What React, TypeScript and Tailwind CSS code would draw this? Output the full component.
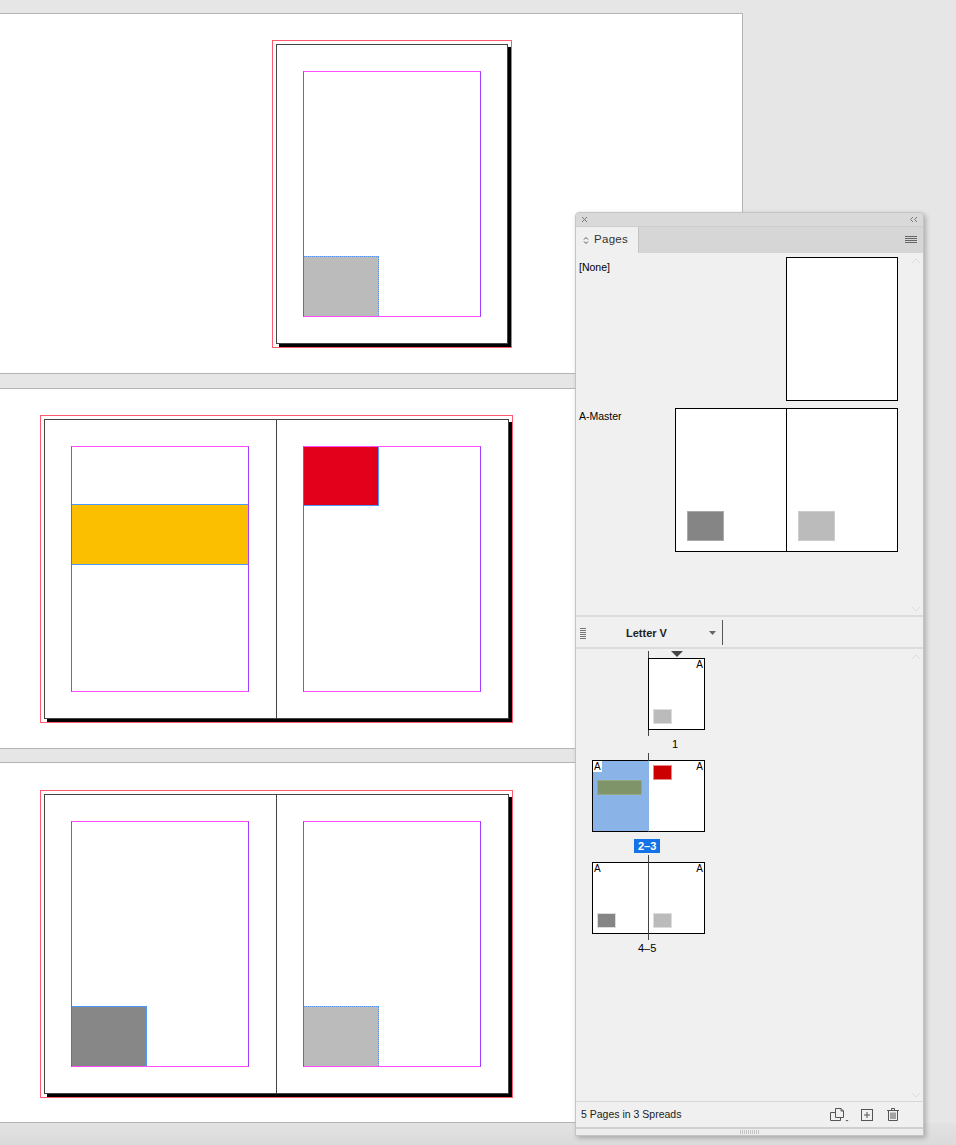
import React from "react";

const ui = { fontFamily: '"Liberation Sans", Arial, sans-serif' };

function Margin({ children }: { children?: React.ReactNode }) {
  return (
    <div className="flex h-[246px] w-[178px] flex-col border-x border-y border-x-[#a23cff] border-y-[#ff4dff]">
      {children}
    </div>
  );
}

function SinglePage() {
  return (
    <div className="h-[308px] w-[240px] border border-[#ff5a6e] p-[3px]">
      <div className="h-[300px] w-[232px] border border-[#444] bg-white pl-[26px] pt-[26px] shadow-[3px_3px_0_0_#000]">
        <Margin>
          <div className="flex-1" />
          <div className="h-[60px] w-[75px] border-r border-t border-dotted border-[#4d8fff] bg-[#bbbbbb]" />
        </Margin>
      </div>
    </div>
  );
}

function Spread({ left, right }: { left: React.ReactNode; right: React.ReactNode }) {
  return (
    <div className="h-[308px] w-[473px] border border-[#ff5a6e] p-[3px]">
      <div className="flex h-[300px] w-[465px] border border-[#444] bg-white shadow-[3px_3px_0_0_#000]">
        <div className="h-full w-[232px] border-r border-[#444] pl-[26px] pt-[26px]">
          <Margin>{left}</Margin>
        </div>
        <div className="h-full flex-1 pl-[26px] pt-[26px]">
          <Margin>{right}</Margin>
        </div>
      </div>
    </div>
  );
}

function Chevron({ up }: { up?: boolean }) {
  return (
    <svg width="10" height="6" viewBox="0 0 10 6" className="text-[#dcdcdc]">
      <path d={up ? "M1 5 L5 1 L9 5" : "M1 1 L5 5 L9 1"} fill="none" stroke="currentColor" strokeWidth="1" />
    </svg>
  );
}

function Thumb({ children, className = "" }: { children?: React.ReactNode; className?: string }) {
  return <div className={"relative h-[72px] w-[57px] bg-white " + className}>{children}</div>;
}

function A({ bg }: { bg?: boolean }) {
  return (
    <span
      className={"absolute top-0 px-[1px] text-[10px] leading-[11px] text-black " + (bg ? "left-0 bg-white" : "right-0")}
      style={ui}
    >
      A
    </span>
  );
}

function Sq({ color, className = "" }: { color: string; className?: string }) {
  return <div className={"absolute h-[15px] w-[19px] border border-[#dddddd] " + color + " " + className} />;
}

export default function App() {
  return (
    <div className="relative h-[1145px] w-[956px] overflow-hidden bg-[#e6e6e6]" style={ui}>
      {/* document canvas */}
      <div className="flex flex-col pt-[13px]">
        <div className="h-[361px] w-[743px] border-y border-r border-[#b4b4b4] bg-white pl-[272px] pt-[26px]">
          <SinglePage />
        </div>
        <div className="mt-[14px] h-[361px] w-[743px] border-y border-r border-[#b4b4b4] bg-white pl-[40px] pt-[26px]">
          <Spread
            left={
              <>
                <div className="h-[57px]" />
                <div className="h-[61px] w-full border-y border-[#4d9aff] bg-[#fbbf00]" />
              </>
            }
            right={<div className="h-[59px] w-[75px] border-b border-r border-[#4d9aff] bg-[#e2001a]" />}
          />
        </div>
        <div className="mt-[13px] h-[361px] w-[743px] border-y border-r border-[#b4b4b4] bg-white pl-[40px] pt-[27px]">
          <Spread
            left={
              <>
                <div className="flex-1" />
                <div className="h-[60px] w-[75px] border-r border-t border-[#4d9aff] bg-[#878787]" />
              </>
            }
            right={
              <>
                <div className="flex-1" />
                <div className="h-[60px] w-[75px] border-r border-t border-dotted border-[#4d8fff] bg-[#bbbbbb]" />
              </>
            }
          />
        </div>
        <div className="h-[30px] bg-gradient-to-b from-[#e2e2e2] to-[#d8d8d8]" />
      </div>

      {/* Pages panel */}
      <div className="absolute left-[575px] top-[212px] flex h-[924px] w-[349px] flex-col overflow-hidden rounded-t-[4px] border border-[#c4c4c4] bg-[#f0f0f0] shadow-[2px_2px_5px_rgba(0,0,0,0.25)]">
        <div className="flex h-[13px] items-center justify-between bg-[#d9d9d9] px-[5px]">
          <svg width="7" height="7" viewBox="0 0 7 7">
            <path d="M1 1 L6 6 M6 1 L1 6" stroke="#7a7a7a" strokeWidth="1" />
          </svg>
          <svg width="9" height="7" viewBox="0 0 9 7">
            <path d="M4 1 L1.5 3.5 L4 6 M8 1 L5.5 3.5 L8 6" fill="none" stroke="#7a7a7a" strokeWidth="1" />
          </svg>
        </div>
        <div className="flex h-[27px] items-stretch border-t border-[#cdcdcd] bg-[#d6d6d6]">
          <div className="flex w-[63px] items-center gap-[5px] border-r border-[#c2c2c2] bg-[#f0f0f0] pl-[7px]">
            <svg width="6" height="9" viewBox="0 0 6 9">
              <path d="M1 3.5 L3 1.5 L5 3.5 M1 5.5 L3 7.5 L5 5.5" fill="none" stroke="#555" strokeWidth="1" />
            </svg>
            <span className="text-[11.5px] tracking-[0.3px] text-[#333]">Pages</span>
          </div>
          <div className="flex-1" />
          <div className="flex items-center pr-[6px]">
            <svg width="12" height="8" viewBox="0 0 12 8">
              <path d="M0 0.5 H12 M0 2.5 H12 M0 4.5 H12 M0 6.5 H12" stroke="#666" strokeWidth="1" />
            </svg>
          </div>
        </div>

        {/* masters */}
        <div className="flex h-[362px]">
          <div className="flex flex-1 flex-col gap-[7px] pt-[4px]">
            <div className="flex justify-between pl-[3px]">
              <span className="mt-[3px] text-[10.5px] text-black">[None]</span>
              <div className="h-[144px] w-[112px] border border-black bg-white" />
            </div>
            <div className="flex justify-between pl-[3px]">
              <span className="mt-[1px] text-[10.5px] text-black">A-Master</span>
              <div className="flex h-[144px] w-[223px] border border-black bg-white">
                <div className="flex h-full w-[111px] flex-col justify-end border-r border-black pb-[10px] pl-[11px]">
                  <div className="h-[30px] w-[37px] border border-[#aaa] bg-[#858585]" />
                </div>
                <div className="flex h-full flex-1 flex-col justify-end pb-[10px] pl-[11px]">
                  <div className="h-[30px] w-[37px] border border-[#ccc] bg-[#bbbbbb]" />
                </div>
              </div>
            </div>
          </div>
          <div className="flex w-[25px] flex-col items-center justify-between pb-[3px] pl-[11px] pt-[5px]">
            <Chevron up />
            <Chevron />
          </div>
        </div>

        {/* toolbar */}
        <div className="flex h-[34px] items-center border-y-2 border-[#dcdcdc]">
          <svg width="6" height="11" viewBox="0 0 6 11" className="ml-[4px] mt-[2px]">
            <path d="M0 0.5 H6 M0 2.5 H6 M0 4.5 H6 M0 6.5 H6 M0 8.5 H6 M0 10.5 H6" stroke="#555" strokeWidth="0.8" />
          </svg>
          <span className="ml-[40px] mt-[2px] text-[11px] font-bold text-[#222]">Letter V</span>
          <svg width="7" height="4" viewBox="0 0 7 4" className="ml-[42px] mt-[1px]">
            <path d="M0 0 H7 L3.5 4 Z" fill="#666" />
          </svg>
          <div className="ml-[6px] mt-[1px] h-[25px] w-px bg-[#555]" />
        </div>

        {/* pages */}
        <div className="flex flex-1">
          <div className="flex flex-1 flex-col gap-[2px] pl-[16px] pt-[2px]">
            {/* page 1 */}
            <div className="relative flex w-[113px] flex-col pt-[7px]">
              <div className="absolute left-[56px] top-0 h-[85px] w-px bg-[#444]" />
              <svg width="12" height="6" viewBox="0 0 12 6" className="absolute left-[79px] top-0">
                <path d="M0 0 H12 L6 6 Z" fill="#444" />
              </svg>
              <Thumb className="ml-[56px] border border-black">
                <A />
                <Sq color="bg-[#bbbbbb]" className="bottom-[5px] left-[4px]" />
              </Thumb>
              <div className="mt-[7px] flex h-[14px] items-center pl-[80px] text-[11px] text-black">1</div>
            </div>
            {/* spread 2-3 */}
            <div className="relative flex w-[113px] flex-col pt-[7px]">
              <div className="absolute left-[56px] top-0 h-[79px] w-px bg-[#444]" />
              <div className="flex h-[72px] w-[113px] border border-black">
                <div className="relative h-full w-[56px] bg-[#8ab4e8]">
                  <A bg />
                  <div className="absolute left-[4px] top-[19px] h-[15px] w-[45px] border border-[#95a884] bg-[#7f9468]" />
                </div>
                <div className="relative h-full flex-1 bg-white">
                  <A />
                  <Sq color="bg-[#cc0000]" className="left-[4px] top-[4px] border-[#e48a8a]" />
                </div>
              </div>
              <div className="mt-[7px] flex h-[14px] items-center pl-[42px]">
                <span className="bg-[#1473e6] px-[4px] text-[11px] font-bold leading-[14px] text-white">2–3</span>
              </div>
            </div>
            {/* spread 4-5 */}
            <div className="relative flex w-[113px] flex-col pt-[7px]">
              <div className="absolute left-[56px] top-0 h-[85px] w-px bg-[#444]" />
              <div className="flex h-[72px] w-[113px] border border-black bg-white">
                <div className="relative h-full w-[56px]">
                  <A bg />
                  <Sq color="bg-[#858585]" className="bottom-[5px] left-[4px]" />
                </div>
                <div className="relative h-full flex-1">
                  <A />
                  <Sq color="bg-[#bbbbbb]" className="bottom-[5px] left-[4px]" />
                </div>
              </div>
              <div className="mt-[7px] flex h-[14px] items-center pl-[46px] text-[11px] text-black">4–5</div>
            </div>
          </div>
          <div className="flex w-[25px] flex-col items-center justify-between pb-[3px] pl-[11px] pt-[5px]">
            <Chevron up />
            <Chevron />
          </div>
        </div>

        {/* footer */}
        <div className="flex h-[26px] items-center border-t border-[#d6d6d6] pl-[5px] pr-[24px]">
          <span className="text-[10.5px] text-[#222]">5 Pages in 3 Spreads</span>
          <div className="flex-1" />
          <svg width="19" height="15" viewBox="0 0 19 15" className="mr-[12px]">
            <path d="M0.5 5.5 H6 M0.5 5.5 V13.5 H10.5 V10" fill="none" stroke="#555" strokeWidth="1" />
            <path d="M5.5 1.5 H11 L13.5 4 V10.5 H5.5 Z M11 1.5 V4 H13.5" fill="none" stroke="#555" strokeWidth="1" />
            <path d="M15.5 13 H18.5 L17 14.5 Z" fill="#555" />
          </svg>
          <svg width="12" height="12" viewBox="0 0 12 12" className="mr-[14px]">
            <rect x="0.5" y="0.5" width="11" height="11" fill="none" stroke="#555" strokeWidth="1" />
            <path d="M6 3 V9 M3 6 H9" stroke="#555" strokeWidth="1" />
          </svg>
          <svg width="12" height="13" viewBox="0 0 12 13">
            <path d="M0 2.5 H12 M4.5 2.5 V0.5 H7.5 V2.5" fill="none" stroke="#555" strokeWidth="1" />
            <path d="M1.5 2.5 V12.5 H10.5 V2.5 M4 4.5 V11 M6 4.5 V11 M8 4.5 V11" fill="none" stroke="#555" strokeWidth="1" />
          </svg>
        </div>
        <div className="flex h-[8px] items-center justify-center border-t-2 border-[#d0d0d0] bg-[#ececec]">
          <svg width="20" height="4" viewBox="0 0 20 4">
            <path d="M0.5 0 V4 M2.5 0 V4 M4.5 0 V4 M6.5 0 V4 M8.5 0 V4 M10.5 0 V4 M12.5 0 V4 M14.5 0 V4 M16.5 0 V4 M18.5 0 V4" stroke="#bbb" strokeWidth="0.8" />
          </svg>
        </div>
      </div>
    </div>
  );
}
